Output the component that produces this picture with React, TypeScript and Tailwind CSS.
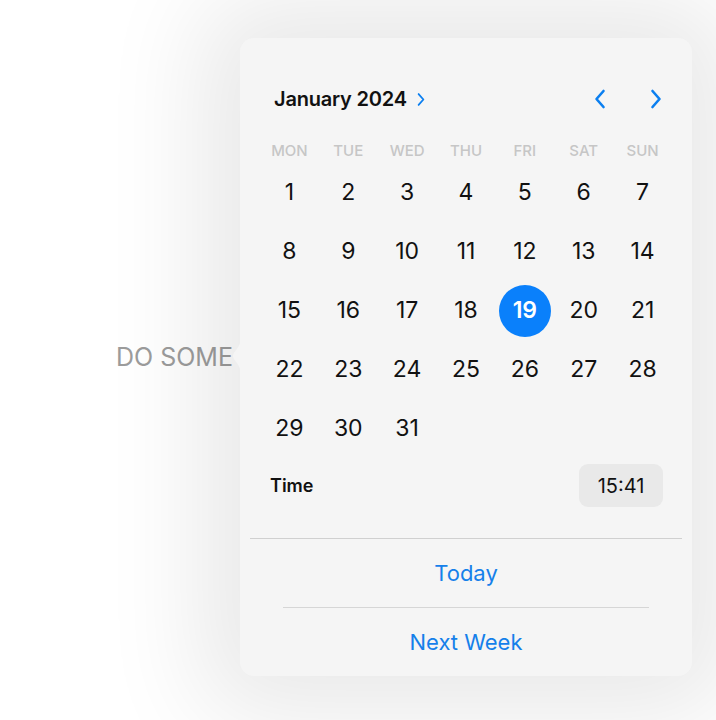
import React from "react";

const WEEKDAYS = ["MON", "TUE", "WED", "THU", "FRI", "SAT", "SUN"];
const DAYS = Array.from({ length: 31 }, (_, i) => i + 1);
const SELECTED = 19;

function Chevron({ dir, className }: { dir: "left" | "right"; className?: string }) {
    return (
        <svg className={className} viewBox="0 0 14 22" fill="none" stroke="currentColor" strokeWidth={2.6} strokeLinecap="round" strokeLinejoin="round">
            {dir === "left" ? <path d="M10.5 3 L3.5 11 L10.5 19" /> : <path d="M3.5 3 L10.5 11 L3.5 19" />}
        </svg>
    );
}

export default function App() {
    return (
        <div className="relative h-[720px] w-[716px] overflow-hidden bg-white font-['Inter','Noto_Sans',sans-serif]">
            {/* text sitting behind the popover */}
            <span className="absolute left-[116px] top-[341px] text-[25px] leading-8 text-[#9c9c9c]">DO SOME</span>

            <div className="relative ml-[240px] mt-[38px] w-[452px] rounded-[14px] bg-[#f5f5f5] pt-[41px] shadow-[0_0_100px_40px_rgba(0,0,0,0.09)]">
                {/* popover tail */}
                <svg className="absolute -left-[7px] top-[299px] h-[38px] w-[8px]" viewBox="0 0 8 38">
                    <path d="M8 0 C8 11 0 14 0 19 C0 24 8 27 8 38 Z" fill="#f5f5f5" />
                </svg>

                {/* header */}
                <div className="flex h-10 items-center justify-between pl-[34px] pr-[29px]">
                    <div className="flex items-center gap-[9px]">
                        <span className="text-[20px] font-semibold tracking-[-0.2px] text-[#111]">January 2024</span>
                        <Chevron dir="right" className="h-[15px] w-[10px] text-[#0b7ff0]" />
                    </div>
                    <div className="flex items-center gap-[42px]">
                        <Chevron dir="left" className="h-[22px] w-[14px] text-[#0b7ff0]" />
                        <Chevron dir="right" className="h-[22px] w-[14px] text-[#0b7ff0]" />
                    </div>
                </div>

                {/* weekdays */}
                <div className="mt-[21px] grid h-[23px] grid-cols-7 items-center px-5">
                    {WEEKDAYS.map((d) => (
                        <span key={d} className="text-center text-[15px] font-medium text-[#c6c6c6]">{d}</span>
                    ))}
                </div>

                {/* days */}
                <div className="grid grid-cols-7 px-5">
                    {DAYS.map((d) => (
                        <div key={d} className="flex h-[59px] items-center justify-center">
                            {d === SELECTED ? (
                                <span className="flex h-[52px] w-[52px] items-center justify-center rounded-full bg-[#0a80fb] text-[23px] font-semibold text-white">{d}</span>
                            ) : (
                                <span className="text-[23px] text-[#111]">{d}</span>
                            )}
                        </div>
                    ))}
                </div>

                {/* time */}
                <div className="mt-[6px] flex items-center justify-between pl-[30px] pr-[29px]">
                    <span className="text-[18px] font-semibold text-[#111]">Time</span>
                    <span className="flex h-[43px] w-[84px] items-center justify-center rounded-[9px] bg-[#e9e9e9] text-[20px] text-[#111]">15:41</span>
                </div>

                <div className="mx-[10px] mt-[31px] h-px bg-[#d0d0d0]" />
                <button className="flex h-[68px] w-full items-center justify-center text-[22px] text-[#1580ea]">Today</button>
                <div className="mx-[43px] h-px bg-[#d6d6d6]" />
                <button className="flex h-[68px] w-full items-center justify-center text-[22px] text-[#1580ea]">Next Week</button>
            </div>
        </div>
    );
}
